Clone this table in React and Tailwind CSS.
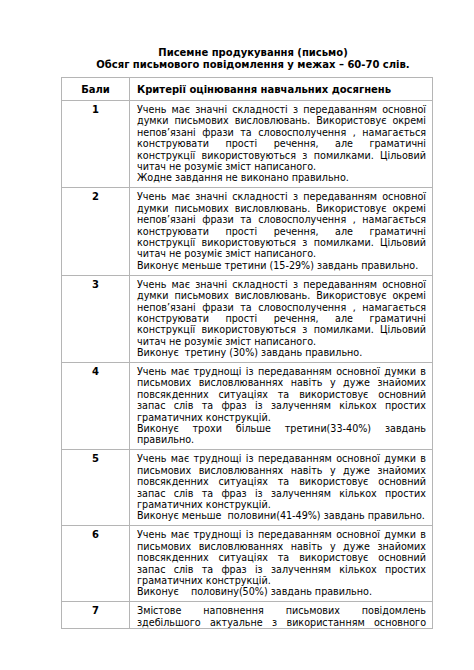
import React from "react";

const base1 = [
  ["Учень  має значні складності  з передаванням основної", true],
  ["думки письмових  висловлювань. Використовує  окремі", true],
  ["непов’язані фрази та словосполучення , намагається", true],
  ["конструювати  прості  речення,  але  граматичні", true],
  ["конструкції використовуються з помилками. Цільовий", true],
  ["читач не розуміє зміст написаного.", false],
];

const base2 = [
  ["Учень має труднощі  із передаванням основної думки в", true],
  ["письмових висловлюваннях навіть у дуже знайомих", true],
  ["повсякденних ситуаціях   та використовує основний", true],
  ["запас слів та фраз із залученням кількох простих", true],
  ["граматичних конструкцій.", false],
];

const rows = [
  { n: "1", lines: [...base1, ["Жодне завдання не виконано правильно.", false]] },
  { n: "2", lines: [...base1, ["Виконує меньше третини (15-29%) завдань правильно.", false]] },
  { n: "3", lines: [...base1, ["Виконує  третину (30%) завдань правильно.", false]] },
  {
    n: "4",
    lines: [
      ...base2,
      ["Виконує  трохи  більше  третини(33-40%)  завдань", true],
      ["правильно.", false],
    ],
  },
  { n: "5", lines: [...base2, ["Виконує меньше  половини(41-49%) завдань правильно.", false]] },
  { n: "6", lines: [...base2, ["Виконує    половину(50%) завдань правильно.", false]] },
  {
    n: "7",
    lines: [
      ["Змістове наповнення письмових повідомлень", true],
      ["здебільшого актуальне з використанням основного", true],
    ],
  },
];

function Line({ text, just }) {
  if (just) {
    return <div className="whitespace-nowrap text-justify [text-align-last:justify]">{text}</div>;
  }
  return <div className="whitespace-pre">{text}</div>;
}

export default function App() {
  return (
    <div className="w-[474px] h-[670px] bg-white text-black overflow-hidden font-['DejaVu_Sans',sans-serif]">
      <div className="pt-[47px] pl-[61px] w-[433px]">
        <div className="text-center font-bold text-[10px] leading-[11.5px] pl-[12px]">
          <div>Писемне продукування (письмо)</div>
          <div>Обсяг письмового повідомлення у межах – 60-70 слів.</div>
        </div>
        <div className="mt-[7px] border border-[#b5b5b5]">
          <div className="flex h-[23px] border-b border-[#b5b5b5] font-bold text-[10px]">
            <div className="w-[68px] shrink-0 border-r border-[#b5b5b5] flex items-center justify-center">
              Бали
            </div>
            <div className="flex-1 min-w-0 flex items-center px-[7px]">
              Критерії оцінювання навчальних досягнень
            </div>
          </div>
          {rows.map((r, i) => {
            const last = i === rows.length - 1;
            return (
              <div key={r.n} className={`flex ${last ? "" : "border-b border-[#b5b5b5]"}`}>
                <div className="w-[68px] shrink-0 border-r border-[#b5b5b5] text-center font-bold text-[10px] leading-[11.4px] pt-[3px]">
                  {r.n}
                </div>
                <div
                  className={`flex-1 min-w-0 pl-[7px] pr-[6px] pt-[3px] text-[9.6px] leading-[11.4px] ${
                    last ? "pb-0" : "pb-[3.5px]"
                  }`}
                >
                  {r.lines.map(([t, j], k) => (
                    <Line key={k} text={t} just={j} />
                  ))}
                </div>
              </div>
            );
          })}
        </div>
      </div>
    </div>
  );
}
